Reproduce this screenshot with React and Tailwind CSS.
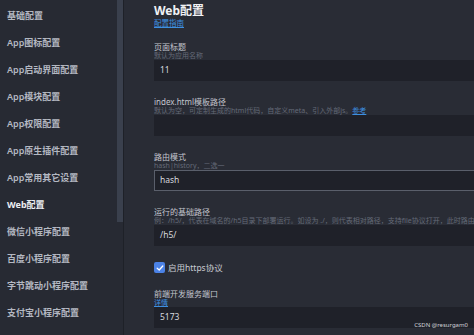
import React from 'react';

const navItems = [
  '基础配置',
  'App图标配置',
  'App启动界面配置',
  'App模块配置',
  'App权限配置',
  'App原生插件配置',
  'App常用其它设置',
  'Web配置',
  '微信小程序配置',
  '百度小程序配置',
  '字节跳动小程序配置',
  '支付宝小程序配置',
];

function Field({ label, hint, link, value, focused, className }) {
  return (
    <div className={className}>
      <div className="text-[8px] leading-[11px] text-[#c3c6ce] whitespace-nowrap">{label}</div>
      {hint && (
        <div className="text-[7px] leading-[8px] text-[#646a77] whitespace-nowrap overflow-hidden">{hint}</div>
      )}
      {link && (
        <div className="text-[7px] leading-[8px] text-[#3d8fe0] underline">{link}</div>
      )}
      <div
        className={
          focused
            ? 'h-[21px] border-y border-l border-[#5a5f6b] bg-[#1f2129] pl-[5px] flex items-center text-[8.5px] text-[#d6d8de]'
            : 'h-[21px] bg-[#1f2129] pl-[6px] flex items-center text-[8.5px] text-[#d6d8de]'
        }
      >
        {value}
      </div>
    </div>
  );
}

export default function App() {
  return (
    <div className="relative flex w-[474px] h-[335px] overflow-hidden bg-[#292c35] font-['Noto_Sans','Noto_Sans_CJK_SC',sans-serif]">
      {/* 左侧菜单 */}
      <aside className="w-[115px] shrink-0 bg-[#272a33] pt-[2px]">
        {navItems.map((item) => (
          <div
            key={item}
            className={
              item === 'Web配置'
                ? 'h-[27px] flex items-center pl-[7px] text-[9px] font-bold text-[#eceef2] whitespace-nowrap'
                : 'h-[27px] flex items-center pl-[7px] text-[9px] font-semibold text-[#b4b8c2] whitespace-nowrap'
            }
          >
            {item}
          </div>
        ))}
      </aside>

      {/* 滚动条 */}
      <div className="w-[8px] shrink-0 bg-[#272a33]">
        <div className="ml-[2px] w-[6px] h-[222px] bg-[#3a404d]" />
      </div>

      {/* 内容 */}
      <main className="flex-1 min-w-0 overflow-hidden border-l border-[#1e2128] pl-[30px]">
        <div className="mt-[3px] text-[12px] leading-[15px] font-bold text-[#f0f1f4]">Web配置</div>
        <div className="text-[7.5px] leading-[10px] text-[#3d8fe0] underline">配置指南</div>

        <Field className="mt-[13px]" label="页面标题" hint="默认为应用名称" value="11" />

        <div className="mt-[15px]">
          <div className="text-[8px] leading-[11px] text-[#c3c6ce] whitespace-nowrap">index.html模板路径</div>
          <div className="text-[7px] leading-[8px] text-[#646a77] whitespace-nowrap">
            默认为空，可定制生成的html代码，自定义meta、引入外部js。
            <span className="text-[#3d8fe0] underline">参考</span>
          </div>
          <div className="h-[21px] bg-[#1f2129]" />
        </div>

        <Field className="mt-[15px]" label="路由模式" hint="hash|history，二选一" value="hash" focused />

        <Field
          className="mt-[15px]"
          label="运行的基础路径"
          hint="例：/h5/，代表在域名的/h5目录下部署运行。如设为 ./，则代表相对路径，支持file协议打开，此时路由模式强制为hash模式"
          value="/h5/"
        />

        <label className="mt-[16px] flex items-center gap-[3px]">
          <span className="w-[11px] h-[11px] rounded-[2px] bg-[#4b82e6] flex items-center justify-center">
            <svg width="8" height="8" viewBox="0 0 10 10" fill="none">
              <path d="M1.5 5.2 L4 7.5 L8.5 2.5" stroke="#ffffff" strokeWidth="1.6" strokeLinecap="round" strokeLinejoin="round" />
            </svg>
          </span>
          <span className="text-[8.5px] leading-[11px] text-[#c8cbd2]">启用https协议</span>
        </label>

        <Field className="mt-[15px]" label="前端开发服务端口" link="详情" value="5173" />
      </main>

      <div className="absolute right-[6px] bottom-[6px] text-[6px] leading-[7px] text-[#cfd2d8]">CSDN @resurgam0</div>
    </div>
  );
}
